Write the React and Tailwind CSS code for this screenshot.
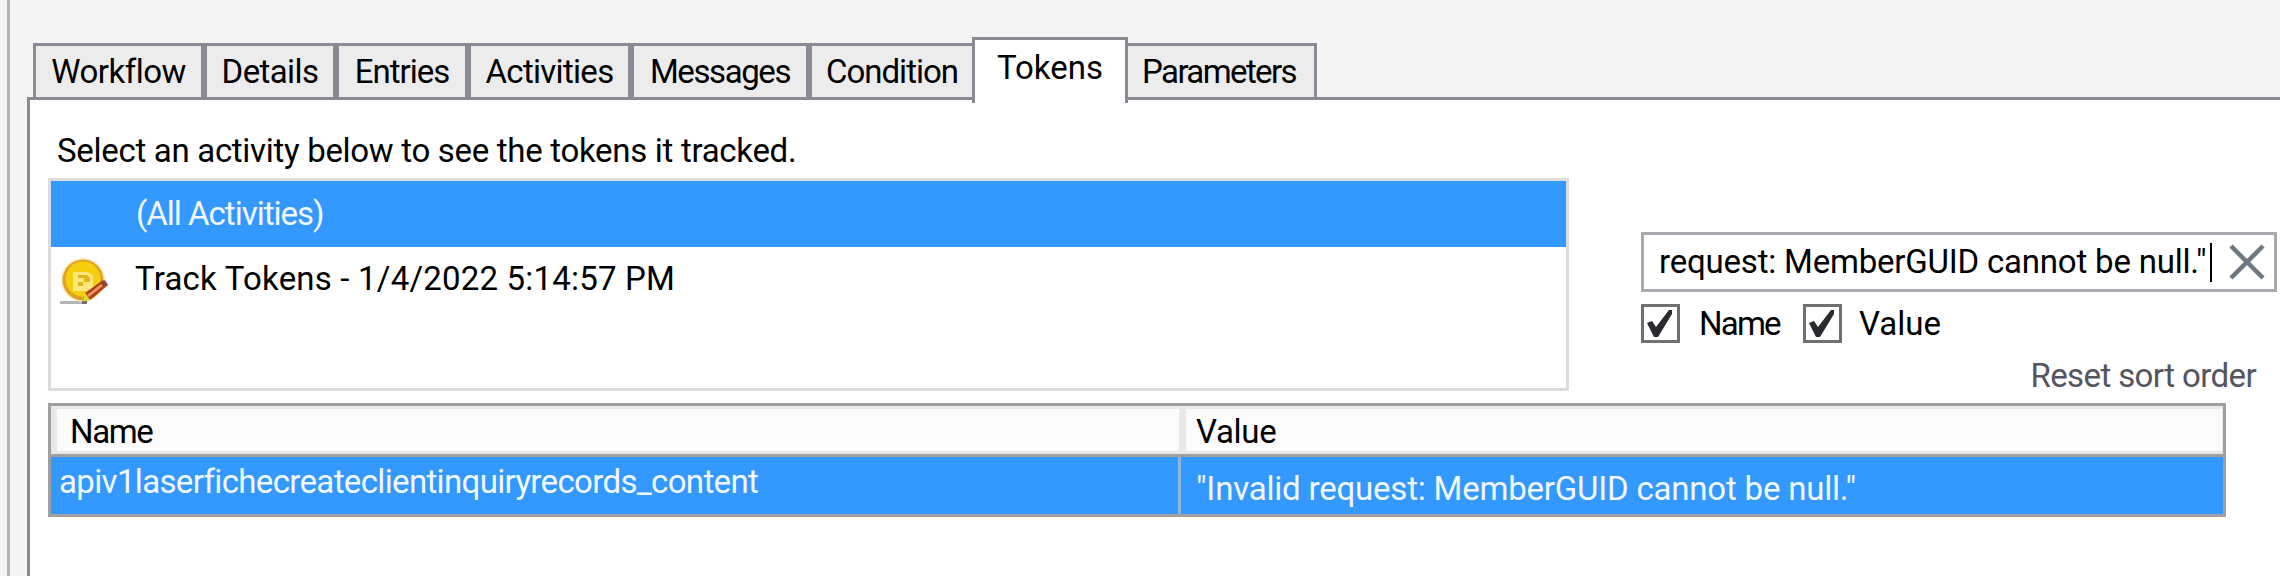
const tabs = [
  { label: "Workflow", cls: "w-[171px] border-l-[3px] border-r-[3px] tracking-[-0.5px]" },
  { label: "Details", cls: "w-[132px] border-l-[3px] border-r-[3px] tracking-[-0.6px]" },
  { label: "Entries", cls: "w-[132px] border-l-[3px] border-r-[3px] tracking-[-1px]" },
  { label: "Activities", cls: "w-[163px] border-l-[3px] border-r-[3px] tracking-[-0.7px]" },
  { label: "Messages", cls: "w-[178px] border-l-[3px] border-r-[3px] tracking-[-1.4px]" },
  { label: "Condition", cls: "w-[163px] border-l-[3px] tracking-[-1px]" },
];

function CoinIcon() {
  return (
    <svg width="50" height="50" viewBox="0 0 50 50" className="shrink-0">
      <rect x="0" y="43" width="22" height="3" fill="#b5b5b5" />
      <circle cx="23" cy="22" r="22" fill="#f8ecc4" />
      <circle cx="23" cy="22" r="20.5" fill="#dca521" />
      <circle cx="23" cy="21" r="17.5" fill="#f6ce10" />
      <path d="M13 14h15l5 4v12l-4 3H13z" fill="#fbe77a" />
      <path d="M18 17h9l3 3v4h-6v-4h-6z" fill="#e3b51c" />
      <path d="M18 24h5v4h-5z" fill="#e3b51c" />
      <path d="M43 22l5 5-18 15-5-7z" fill="#a8401a" />
      <path d="M41 26l2 2-14 11-2-2z" fill="#ee9060" />
      <path d="M45 22l3 5-2 1-4-4z" fill="#8a4a4a" />
      <path d="M25 35l5 7-7 4z" fill="#d8e028" />
      <rect x="22" y="43" width="5" height="3" fill="#6f6f6f" />
    </svg>
  );
}

function CheckBox() {
  return (
    <span className="w-[39px] h-[39px] border-[3px] border-[#707070] bg-white flex items-center justify-center shrink-0">
      <svg width="33" height="33" viewBox="0 0 33 33">
        <path d="M3 16l5-2 4 6L25 3h3v4L14 30h-4z" fill="#2b2b2f" />
      </svg>
    </span>
  );
}

export default function App() {
  return (
    <div className="w-[2280px] h-[576px] bg-[#f5f5f5] flex overflow-hidden text-[33px] leading-[36px] text-black font-['Roboto',sans-serif]">
      <div className="w-[7px] shrink-0 bg-[#f5f5f5]" />
      <div className="w-[3px] shrink-0 bg-[#b4b4b4]" />
      <div className="flex-1 pl-[17px] flex flex-col">
        <div className="h-[60px] mt-[37px] pl-[6px] flex items-end shrink-0">
          {tabs.map((t) => (
            <div
              key={t.label}
              className={`h-[54px] bg-[#ececec] border-t-[3px] border-[#8a8a94] flex items-center justify-center ${t.cls}`}
            >
              {t.label}
            </div>
          ))}
          <div className="w-[156px] h-[66px] -mb-[6px] relative z-10 bg-white border-t-[3px] border-x-[3px] border-[#8a8a94] flex justify-center pt-[10px]">
            Tokens
          </div>
          <div className="w-[189px] h-[54px] bg-[#ececec] border-t-[3px] border-r-[3px] border-[#8a8a94] flex items-center justify-center pr-[4px] tracking-[-1.6px]">
            Parameters
          </div>
        </div>

        <div className="flex-1 bg-white border-t-[3px] border-l-[3px] border-[#8a8a94] pl-[18px]">
          <div className="h-[78px] pl-[9px] pt-[23px] flex items-center tracking-[-0.3px]">
            Select an activity below to see the tokens it tracked.
          </div>

          <div className="flex">
            <div className="w-[1521px] h-[213px] border-[3px] border-[#dcdcdc] shrink-0">
              <div className="h-[66px] bg-[#3399ff] text-[#f2f7ff] pl-[85px] flex items-center tracking-[-1px]">
                (All Activities)
              </div>
              <div className="pl-[9px] pt-[11px] flex items-start">
                <CoinIcon />
                <span className="ml-[25px] mt-[3px] tracking-[0.2px]">Track Tokens - 1/4/2022 5:14:57 PM</span>
              </div>
            </div>

            <div className="ml-[72px] w-[636px] h-[213px] pt-[54px] shrink-0">
              <div className="h-[60px] border-[3px] border-[#a9a9b0] bg-white flex items-center pl-[15px] pr-[9px]">
                <span className="whitespace-nowrap tracking-[-0.2px]">request: MemberGUID cannot be null."</span>
                <span className="w-[2px] h-[39px] bg-black ml-[4px]" />
                <svg width="36" height="36" viewBox="0 0 36 36" className="ml-auto text-[#6e7883]">
                  <path d="M2 2l32 32M34 2L2 34" stroke="currentColor" strokeWidth="4.5" fill="none" />
                </svg>
              </div>
              <div className="h-[39px] mt-[12px] flex items-center">
                <CheckBox />
                <span className="ml-[19px] w-[104px] tracking-[-1.8px]">Name</span>
                <CheckBox />
                <span className="ml-[17px]">Value</span>
              </div>
              <div className="mt-[15px] pr-[21px] text-right text-[#555560] tracking-[-0.6px]">Reset sort order</div>
            </div>
          </div>

          <div className="w-[2178px] h-[114px] mt-[12px] border-[3px] border-[#a0a0a0]">
            <div className="h-[48px] bg-[#e8e8e8] py-[3px] pl-[6px] flex">
              <div className="w-[1122px] bg-[#fbfbfb] pl-[13px] pt-[3px] flex items-center tracking-[-1.4px]">Name</div>
              <div className="w-[7px]" />
              <div className="flex-1 bg-[#fbfbfb] pl-[10px] pt-[3px] flex items-center mr-[1px] tracking-[-0.3px]">Value</div>
            </div>
            <div className="h-[60px] border-t-[3px] border-[#a0a0a0] bg-[#3399ff] text-[#f2f7ff] flex">
              <div className="w-[1130px] pl-[8px] pb-[8px] flex items-center border-r-[3px] border-[#8fb4d8] tracking-[-0.65px]">
                apiv1laserfichecreateclientinquiryrecords_content
              </div>
              <div className="flex-1 pl-[15px] pt-[6px] flex items-center tracking-[-0.2px]">
                "Invalid request: MemberGUID cannot be null."
              </div>
            </div>
          </div>
        </div>
      </div>
    </div>
  );
}
